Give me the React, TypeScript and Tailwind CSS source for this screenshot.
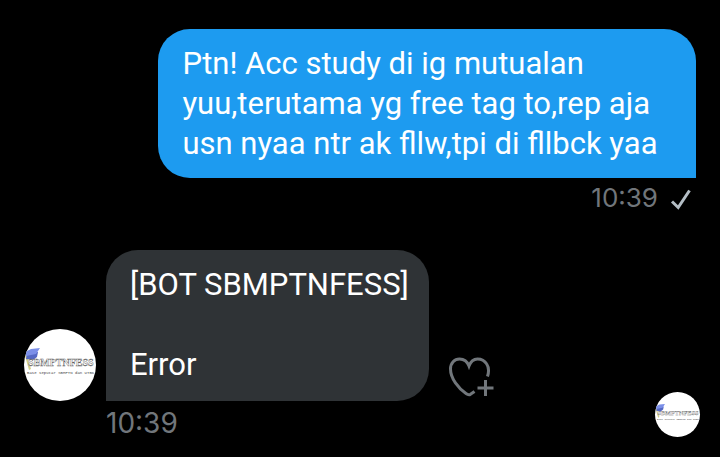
import React from 'react';

type AvatarProps = {
  className: string;
};

// Round account picture, used next to a message and as the read receipt
const Avatar: React.FC<AvatarProps> = ({ className }) => (
  <svg
    viewBox="0 0 72 72"
    className={`shrink-0 rounded-full bg-white ${className}`}
    role="img"
    aria-label="SBMPTNFESS avatar"
  >
    <path d="M1 27l4 14 2-1-4-13z" fill="#d2d08a" />
    <path d="M3 24l11-1-1 5-4 3-7-1z" fill="#5468c4" />
    <path d="M1 23l6-3 9-1-4 6-10 2z" fill="#7b8fe8" />
    <text
      x="4"
      y="37"
      fontFamily="'Liberation Serif', serif"
      fontSize="10"
      fontWeight="700"
      fill="#ffffff"
      stroke="#5c5c5c"
      strokeWidth="0.4"
    >
      SBMPTNFESS
    </text>
    <text x="3" y="45" fontFamily="'Liberation Mono', monospace" fontSize="4" fill="#444444">
      Base seputar SBMPTN dan UTBK
    </text>
  </svg>
);

const SentIcon: React.FC = () => (
  <svg viewBox="0 0 22 22" className="h-[22px] w-[22px]" fill="none" role="img" aria-label="Sent">
    <path d="M2 13.500l6.200 6L19.500 2.500" stroke="#b4bec5" strokeWidth="3" />
  </svg>
);

const HeartPlusIcon: React.FC = () => (
  <svg
    viewBox="0 0 46 40"
    className="h-10 w-[46px]"
    fill="none"
    stroke="#71767b"
    strokeWidth="3"
    aria-hidden="true"
  >
    <path d="M38.500 19.500c1.600-5 1.200-9.500-.8-12.500C35.500 3.500 32 2 28.500 2c-4 0-7 3-8.500 7C18.500 5 15 2 10.500 2 5.500 2 1.500 6 1.500 12c0 9.500 8 19.500 15.500 24.500 1.500 1.100 3 1.500 4.500.8l4-2.800" />
    <path d="M36.500 23v16M28.500 31h16" />
  </svg>
);

const App: React.FC = () => {
  return (
    <main className="min-h-screen bg-black px-6 pt-[29px] pb-3 font-['Roboto',sans-serif] text-white">
      {/* Outgoing message */}
      <section className="flex flex-col items-end">
        <p className="max-w-[80%] rounded-[32px] rounded-br-none bg-[#1d9bf0] px-6 pt-[15px] pb-[14px] text-[31px] leading-10">
          Ptn! Acc study di ig mutualan yuu,terutama yg free tag to,rep aja usn nyaa ntr ak fllw,tpi
          di fllbck yaa
        </p>
        <div className="flex h-10 items-end gap-3 pr-1 pb-2 text-[#71767b]">
          <time className="font-['Inter',sans-serif] text-[26px] leading-6">10:39</time>
          <SentIcon />
        </div>
      </section>

      {/* Incoming message */}
      <section className="-mr-1 mt-8 flex items-end justify-between">
        <div>
          <div className="flex items-end">
            <Avatar className="mr-[10px] h-[72px] w-[72px]" />
            <p className="rounded-[32px] rounded-bl-none bg-[#2f3336] pt-[15px] pr-5 pb-4 pl-6 text-[31px] leading-10 whitespace-pre-line">
              {'[BOT SBMPTNFESS]\n\nError'}
            </p>
            <button type="button" className="mb-1 ml-5" aria-label="Add reaction">
              <HeartPlusIcon />
            </button>
          </div>
          <time className="block pl-[82px] font-['Inter',sans-serif] text-[28px] leading-[44px] text-[#71767b]">
            10:39
          </time>
        </div>
        <Avatar className="mb-2 h-[45px] w-[45px]" />
      </section>
    </main>
  );
};

export default App;
